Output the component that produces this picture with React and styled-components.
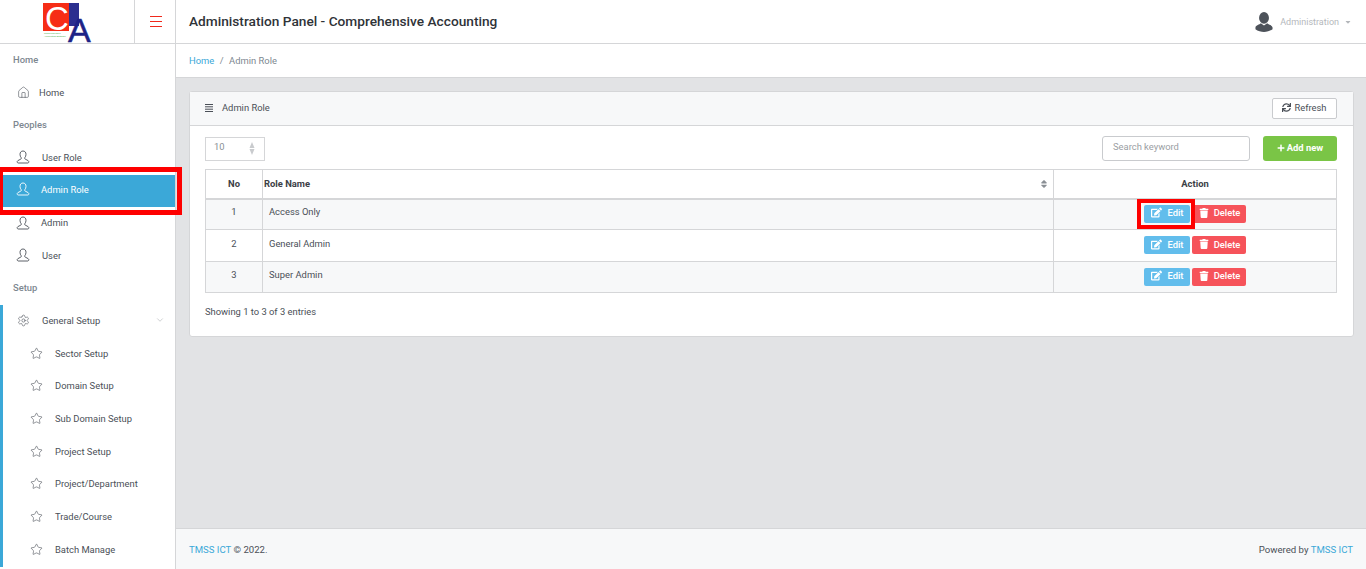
import React from "react";
import styled, { createGlobalStyle } from "styled-components";
import { FaEdit, FaTrash, FaPlus, FaSync, FaSort, FaCaretDown } from "react-icons/fa";
import { Home as HomeIcon, Settings, Star, ChevronDown } from "lucide-react";

const Global = createGlobalStyle`
  html, body { margin: 0; padding: 0; height: 569px; overflow: hidden; }
  body { font-family: Roboto, "Liberation Sans", sans-serif; font-size: 9.4px; color: #4a4f57; background: #fff; }
  * { box-sizing: border-box; }
`;

const Page = styled.div`
  position: relative;
  width: 1366px;
  height: 569px;
  overflow: hidden;
  display: flex;
  flex-direction: column;
`;
const Header = styled.header`
  height: 44px;
  flex: none;
  display: flex;
  border-bottom: 1px solid #d5d6d8;
  background: #fff;
`;
const LogoCell = styled.div`
  width: 135px;
  border-right: 1px solid #d5d6d8;
  padding: 1px 0 0 43px;
`;
const BurgerCell = styled.div`
  width: 41px;
  border-right: 1px solid #d5d6d8;
  display: flex;
  align-items: center;
  justify-content: center;
  padding-left: 1px;
`;
const Title = styled.h1`
  margin: 0;
  flex: 1;
  padding-left: 13px;
  font-size: 13.7px;
  font-weight: 500;
  line-height: 43px;
  color: #2f3338;
`;
const Account = styled.div`
  display: flex;
  align-items: center;
  padding-right: 14px;
  color: #b4b7bb;
  font-size: 9px;
  gap: 5px;
`;
const AvatarSlot = styled.span`
  display: flex;
  margin-right: 2px;
`;
const Body = styled.div`
  flex: 1;
  display: flex;
  min-height: 0;
`;
const Sidebar = styled.nav`
  width: 176px;
  flex: none;
  border-right: 1px solid #d5d6d8;
  background: #fff;
  overflow: hidden;
`;
const HomeGroup = styled.div`
  height: 65.4px;
  padding-top: 1px;
`;
const SectionLabel = styled.div`
  height: 32.7px;
  padding: 0 0 3px 13px;
  display: flex;
  align-items: center;
  font-size: 9.4px;
  font-weight: 500;
  color: #7d8790;
`;
const NavItem = styled.div`
  height: ${(p) => (p.$active ? 32 : 32.7)}px;
  display: flex;
  align-items: center;
  font-size: 9.4px;
  padding: 0 0 ${(p) => (p.$active ? 3 : 2.4)}px ${(p) => p.$pad}px;
  gap: ${(p) => p.$gap}px;
  color: ${(p) => (p.$active ? "#fff" : "#4a4f57")};
  background: ${(p) => (p.$active ? "#3ba8d8" : "transparent")};
  margin-left: ${(p) => (p.$active ? 3 : 0)}px;
  svg { flex: none; }
`;
const ActiveWrap = styled.div`
  height: 32.7px;
`;
const SubGroup = styled.div`
  border-left: 3px solid #3ba8d8;
  margin-top: -0.25px;
`;
const Chevron = styled.span`
  margin-left: auto;
  margin-right: 10px;
  display: flex;
  color: #8a8f95;
`;
const Main = styled.main`
  flex: 1;
  display: flex;
  flex-direction: column;
  min-width: 0;
  background: #e2e3e5;
`;
const Breadcrumb = styled.div`
  height: 34px;
  flex: none;
  background: #fff;
  border-bottom: 1px solid #d5d6d8;
  padding: 0 0 1px 13px;
  display: flex;
  align-items: center;
  gap: 5.5px;
  color: #7d8790;
  font-size: 9.4px;
`;
const Link = styled.span`
  color: #3ba8d8;
`;
const Content = styled.div`
  flex: 1;
  padding: 13px 12px 0 13px;
`;
const Card = styled.section`
  height: 246px;
  background: #fff;
  border: 1px solid #d5d6d8;
  border-radius: 3px;
`;
const CardHead = styled.div`
  height: 34px;
  background: #f7f8f9;
  border-bottom: 1px solid #d5d6d8;
  display: flex;
  align-items: center;
  padding: 0 16px 0 15px;
  gap: 9px;
  font-size: 9.4px;
  color: #4a4f57;
`;
const CardTitle = styled.span`
  margin-top: -2px;
`;
const RefreshButton = styled.button`
  margin-left: auto;
  height: 21px;
  width: 65px;
  border: 1px solid #c9cbce;
  border-radius: 2px;
  background: #fff;
  font: inherit;
  font-size: 9.4px;
  color: #4a4f57;
  display: flex;
  align-items: center;
  justify-content: center;
  gap: 3px;
  padding: 0 0 2px;
`;
const CardBody = styled.div`
  padding: 10px 16px 0 15px;
`;
const Tools = styled.div`
  display: flex;
  align-items: center;
  margin-bottom: 8px;
`;
const PageSize = styled.div`
  width: 60px;
  height: 24px;
  border: 1px solid #d5d6d8;
  padding: 0 0 4px 8px;
  display: flex;
  align-items: center;
  justify-content: space-between;
  color: #8a8f95;
  font-size: 9.4px;
`;
const Search = styled.div`
  margin-left: auto;
  width: 148px;
  height: 25px;
  border: 1px solid #c9cbce;
  border-radius: 3px;
  padding-left: 10px;
  line-height: 20px;
  color: #9a9ea3;
  font-size: 9.4px;
`;
const AddButton = styled.button`
  margin-left: 13px;
  width: 74px;
  height: 25px;
  border: 0;
  border-radius: 3px;
  background: #7ac546;
  color: #fff;
  font: inherit;
  font-size: 9.4px;
  font-weight: 700;
  display: flex;
  align-items: center;
  justify-content: center;
  gap: 2px;
  padding: 0 0 2px;
`;
const Table = styled.table`
  width: 1131px;
  border-collapse: collapse;
  table-layout: fixed;
  font-size: 9.4px;
  color: #4a4f57;
`;
const Th = styled.th`
  height: 29px;
  border: 1px solid #d5d6d8;
  border-bottom: 2px solid #d5d6d8;
  font-weight: 700;
  font-size: 9.4px;
  color: #3c4046;
  text-align: ${(p) => p.$align || "center"};
  padding: 0 ${(p) => (p.$align ? 1 : 0)}px;
  position: relative;
`;
const SortMark = styled.span`
  position: absolute;
  right: 4px;
  top: 9px;
  color: #8a8f95;
  display: flex;
`;
const Row = styled.tr`
  background: ${(p) => (p.$odd ? "#f7f8f9" : "#fff")};
`;
const Td = styled.td`
  height: ${(p) => p.$h}px;
  border: 1px solid #d5d6d8;
  text-align: ${(p) => p.$align || "center"};
  padding: 0 0 5px ${(p) => (p.$align ? 6 : 0)}px;
`;
const ActionCell = styled.td`
  border: 1px solid #d5d6d8;
  padding: 0 0 1px 0;
`;
const Actions = styled.div`
  display: flex;
  justify-content: center;
  gap: 2px;
`;
const ActionButton = styled.button`
  height: 18px;
  width: ${(p) => p.$w}px;
  border: 0;
  border-radius: 2px;
  background: ${(p) => p.$bg};
  color: #fff;
  font: inherit;
  font-size: 9.4px;
  font-weight: 500;
  display: flex;
  align-items: center;
  justify-content: center;
  gap: 5px;
  padding: 0 0 2px 1px;
`;
const Info = styled.div`
  margin-top: 13px;
  font-size: 9.4px;
  color: #4a4f57;
`;
const Footer = styled.footer`
  height: 41px;
  flex: none;
  background: #f7f8f9;
  border-top: 1px solid #d5d6d8;
  padding: 0 13px;
  display: flex;
  align-items: center;
  justify-content: space-between;
  font-size: 9.6px;
  color: #4a4f57;
`;
const Annotation = styled.div`
  position: absolute;
  left: ${(p) => p.$x}px;
  top: ${(p) => p.$y}px;
  width: ${(p) => p.$w}px;
  height: ${(p) => p.$h}px;
  border: ${(p) => p.$b}px solid #fe0000;
  pointer-events: none;
`;

const UserLine = () => (
  <svg width="14" height="14" viewBox="0 0 14 14" fill="none" stroke="currentColor" strokeWidth="0.9">
    <path d="M7 1C5.2 1 4 2.300 4 4.300c0 1.400.5 2.700 1.200 3.400.2.300.2.900-.1 1.200C4.400 9.600 1.500 10.300 1.200 11.500c-.1.500.2 1.500.9 1.500h9.800c.7 0 1-.9.9-1.500-.3-1.200-3.200-1.900-3.900-2.600-.3-.3-.3-.9-.1-1.200C9.500 7 10 5.700 10 4.300 10 2.300 8.800 1 7 1z" />
  </svg>
);

const Logo = () => (
  <svg width="50" height="42" viewBox="0 0 50 42" style={{ display: "block", overflow: "visible" }}>
    <rect x="0" y="2" width="26" height="28" fill="#f62d16" />
    <rect x="26" y="2" width="10" height="23" fill="#2b2f8f" />
    <text x="2" y="29" fontFamily="Liberation Sans, sans-serif" fontSize="33" fill="#fff">C</text>
    <text x="25" y="41" fontFamily="Liberation Sans, sans-serif" fontSize="34" fill="#1d2386" stroke="#1d2386" strokeWidth="0.5">A</text>
    <text x="1" y="33" fontFamily="Liberation Sans, sans-serif" fontSize="2.400" fill="#3aa935">Comprehensive</text>
    <text x="1" y="36" fontFamily="Liberation Sans, sans-serif" fontSize="2.400" fill="#3aa935">Accounting Software</text>
  </svg>
);

const Burger = () => (
  <svg width="12" height="11" viewBox="0 0 12 11" stroke="#f0291c" strokeWidth="1">
    <path d="M0 .5h12M0 5.500h12M0 10.500h12" />
  </svg>
);

const Lines = () => (
  <svg width="8" height="8" viewBox="0 0 8 8" stroke="#4a4f57" strokeWidth="1" style={{ marginTop: -2 }}>
    <path d="M0 .5h8M0 2.800h8M0 5.200h8M0 7.500h8" />
  </svg>
);

const Avatar = () => (
  <svg width="18" height="20" viewBox="0 0 20 22" fill="#4d525a">
    <ellipse cx="10" cy="6.500" rx="5.500" ry="6.500" />
    <path d="M6.500 12.500 C5 14 1 14.500 .5 17 L.5 19 C3 21 7 22 10 22 C13 22 17 21 19.500 19 L19.500 17 C19 14.500 15 14 13.500 12.500 L10 15z" />
  </svg>
);

const SelectArrows = () => (
  <svg width="6" height="13" viewBox="0 0 6 13" fill="#c9cbce" style={{ marginRight: 9, marginTop: 4 }}>
    <path d="M3 0l2.500 6H.5zM3 13L.5 7h5z" />
  </svg>
);

const subItems = ["Sector Setup", "Domain Setup", "Sub Domain Setup", "Project Setup", "Project/Department", "Trade/Course", "Batch Manage"];
const rows = [
  { no: 1, name: "Access Only", h: 31, odd: true },
  { no: 2, name: "General Admin", h: 32, odd: false },
  { no: 3, name: "Super Admin", h: 31, odd: true },
];

export default function App() {
  return (
    <Page>
      <Global />
      <Header>
        <LogoCell><Logo /></LogoCell>
        <BurgerCell><Burger /></BurgerCell>
        <Title>Administration Panel - Comprehensive Accounting</Title>
        <Account>
          <AvatarSlot><Avatar /></AvatarSlot>
          <span>Administration</span>
          <FaCaretDown size={8} />
        </Account>
      </Header>
      <Body>
        <Sidebar>
          <HomeGroup>
            <SectionLabel>Home</SectionLabel>
            <NavItem $pad={17} $gap={9}><HomeIcon size={13} strokeWidth={1.1} />Home</NavItem>
          </HomeGroup>
          <SectionLabel>Peoples</SectionLabel>
          <NavItem $pad={16} $gap={12}><UserLine />User Role</NavItem>
          <ActiveWrap>
            <NavItem $active $pad={13} $gap={11}><UserLine />Admin Role</NavItem>
          </ActiveWrap>
          <NavItem $pad={16} $gap={11}><UserLine />Admin</NavItem>
          <NavItem $pad={16} $gap={12}><UserLine />User</NavItem>
          <SectionLabel>Setup</SectionLabel>
          <SubGroup>
            <NavItem $pad={14} $gap={12}>
              <Settings size={13} strokeWidth={1.1} />General Setup
              <Chevron><ChevronDown size={10} strokeWidth={1} /></Chevron>
            </NavItem>
            {subItems.map((s) => (
              <NavItem key={s} $pad={27} $gap={12}><Star size={13} strokeWidth={1.1} />{s}</NavItem>
            ))}
          </SubGroup>
        </Sidebar>
        <Main>
          <Breadcrumb><Link>Home</Link><span>/</span><span>Admin Role</span></Breadcrumb>
          <Content>
            <Card>
              <CardHead>
                <Lines />
                <CardTitle>Admin Role</CardTitle>
                <RefreshButton><FaSync size={9} />Refresh</RefreshButton>
              </CardHead>
              <CardBody>
                <Tools>
                  <PageSize>10<SelectArrows /></PageSize>
                  <Search>Search keyword</Search>
                  <AddButton><FaPlus size={8} />Add new</AddButton>
                </Tools>
                <Table>
                  <colgroup>
                    <col style={{ width: 57 }} />
                    <col style={{ width: 791 }} />
                    <col style={{ width: 283 }} />
                  </colgroup>
                  <thead>
                    <tr>
                      <Th>No</Th>
                      <Th $align="left">Role Name<SortMark><FaSort size={10} /></SortMark></Th>
                      <Th>Action</Th>
                    </tr>
                  </thead>
                  <tbody>
                    {rows.map((r) => (
                      <Row key={r.no} $odd={r.odd}>
                        <Td $h={r.h}>{r.no}</Td>
                        <Td $h={r.h} $align="left">{r.name}</Td>
                        <ActionCell>
                          <Actions>
                            <ActionButton $w={46} $bg="#62bdec"><FaEdit size={11} />Edit</ActionButton>
                            <ActionButton $w={54} $bg="#f6535a"><FaTrash size={10} />Delete</ActionButton>
                          </Actions>
                        </ActionCell>
                      </Row>
                    ))}
                  </tbody>
                </Table>
                <Info>Showing 1 to 3 of 3 entries</Info>
              </CardBody>
            </Card>
          </Content>
          <Footer>
            <span><Link>TMSS ICT</Link> © 2022.</span>
            <span>Powered by <Link>TMSS ICT</Link></span>
          </Footer>
        </Main>
      </Body>
      <Annotation $x={-2} $y={167} $w={184} $h={48} $b={5} />
      <Annotation $x={1137} $y={199} $w={58} $h={30} $b={4} />
    </Page>
  );
}
